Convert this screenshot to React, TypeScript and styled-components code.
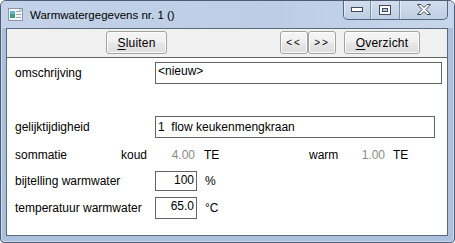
import styled, { createGlobalStyle } from "styled-components";

const GlobalStyle = createGlobalStyle`
  html, body {
    margin: 0;
    padding: 0;
    background: #ffffff;
  }
  body {
    font-family: "Liberation Sans", Arial, sans-serif;
    font-size: 12px;
    color: #000;
  }
  * {
    box-sizing: border-box;
  }
`;

const AppIcon = () => (
  <svg width="15" height="13" viewBox="0 0 15 13">
    <rect x="0.5" y="0.5" width="14" height="12" fill="#f4f6f8" stroke="#8a96a6" />
    <rect x="2" y="3" width="5" height="7" fill="#3f9a86" />
    <rect x="2" y="3" width="5" height="3" fill="#5fb7c9" />
    <rect x="8" y="3" width="5" height="1" fill="#9aa6b4" />
    <rect x="8" y="6" width="5" height="1" fill="#9aa6b4" />
    <rect x="8" y="9" width="5" height="1" fill="#9aa6b4" />
    <rect x="11" y="1" width="3" height="2" fill="#c7d0db" />
  </svg>
);

const MinGlyph = () => (
  <svg width="12" height="5" viewBox="0 0 12 5">
    <rect x="0.5" y="0.5" width="11" height="4" fill="#ffffff" stroke="#3f4d62" />
  </svg>
);

const MaxGlyph = () => (
  <svg width="12" height="10" viewBox="0 0 12 10">
    <rect x="0.5" y="0.5" width="11" height="9" fill="#ffffff" stroke="#3f4d62" />
    <rect x="3.5" y="3.5" width="5" height="3" fill="#bccbe0" stroke="#3f4d62" />
  </svg>
);

const CloseGlyph = () => (
  <svg width="14" height="11" viewBox="0 0 14 11">
    <path
      d="M0.5 0.5 H4 L7 3.5 L10 0.5 H13.5 L9 5.5 L13.5 10.5 H10 L7 7.5 L4 10.5 H0.5 L5 5.5 Z"
      fill="#ffffff"
      stroke="#3f4d62"
      strokeLinejoin="round"
    />
  </svg>
);

export default function App() {
  return (
    <>
      <GlobalStyle />
      <Window>
        <TitleBar>
          <AppIcon />
          <Caption>Warmwatergegevens nr. 1 ()</Caption>
          <Controls>
            <ControlButton $w={27}>
              <MinGlyph />
            </ControlButton>
            <ControlButton $w={29}>
              <MaxGlyph />
            </ControlButton>
            <ControlButton $w={47}>
              <CloseGlyph />
            </ControlButton>
          </Controls>
        </TitleBar>
        <Client>
          <Toolbar>
            <PushButton $w={61}>
              <u>S</u>luiten
            </PushButton>
            <NavGroup>
              <PushButton $w={28} $small>
                &lt;&lt;
              </PushButton>
              <PushButton $w={28} $small>
                &gt;&gt;
              </PushButton>
              <PushButton $w={76} $gap={8}>
                <u>O</u>verzicht
              </PushButton>
            </NavGroup>
          </Toolbar>
          <Form>
            <Row $top={2} $h={22}>
              <Label>omschrijving</Label>
              <Field $valign="top">&lt;nieuw&gt;</Field>
            </Row>
            <Row $top={32} $h={22}>
              <Label>gelijktijdigheid</Label>
              <Field $w={280}>1&nbsp; flow keukenmengkraan</Field>
            </Row>
            <Row $top={9} $h={16}>
              <Cell $w={106}>sommatie</Cell>
              <Cell $w={29}>koud</Cell>
              <Cell $w={45} $right $muted>
                4.00
              </Cell>
              <Cell $w={105} $gap={9}>
                TE
              </Cell>
              <Cell $w={31}>warm</Cell>
              <Cell $w={45} $right $muted>
                1.00
              </Cell>
              <Cell $gap={8}>TE</Cell>
            </Row>
            <Row $top={8} $h={20}>
              <Label>bijtelling warmwater</Label>
              <Field $w={42} $valign="top" $right>
                100
              </Field>
              <Unit>%</Unit>
            </Row>
            <Row $top={6} $h={22}>
              <Label>temperatuur warmwater</Label>
              <Field $w={42} $valign="top" $right>
                65.0
              </Field>
              <Unit>°C</Unit>
            </Row>
          </Form>
        </Client>
      </Window>
    </>
  );
}

const Window = styled.div`
  width: 455px;
  height: 243px;
  display: flex;
  flex-direction: column;
  background: #aac0dc;
  border: 1px solid #4c5d75;
  border-radius: 6px 6px 4px 4px;
  box-shadow: inset 0 0 0 1px #cddbee;
  overflow: hidden;
`;

const TitleBar = styled.div`
  height: 27px;
  flex: none;
  display: flex;
  align-items: center;
  padding-left: 7px;
  background: linear-gradient(to right, #c3d2e8, #bccde5 60%, #c7d6ea);
`;

const Caption = styled.span`
  margin-left: 7px;
  font-size: 11.5px;
  color: #000;
  flex: 1;
`;

const Controls = styled.div`
  align-self: flex-start;
  display: flex;
  height: 20px;
  margin-top: -1px;
  margin-right: 6px;
  border: 1px solid #55667e;
  border-top: none;
  border-radius: 0 0 5px 5px;
  overflow: hidden;
  background: linear-gradient(to bottom, #d3deee, #bfcee3);
`;

const ControlButton = styled.div<{ $w: number }>`
  width: ${(p) => p.$w}px;
  display: flex;
  align-items: center;
  justify-content: center;
  box-shadow: inset 1px 1px 0 rgba(255, 255, 255, 0.55);
  &:not(:last-child) {
    border-right: 1px solid #7d90ab;
  }
`;

const Client = styled.div`
  flex: 1;
  display: flex;
  flex-direction: column;
  margin: 0 6px 6px 5px;
  border: 1px solid #5a6a80;
  background: #ffffff;
`;

const Toolbar = styled.div`
  height: 29px;
  flex: none;
  display: flex;
  align-items: flex-start;
  padding: 2px 27px 0 99px;
  background: #f0f0f0;
  border-bottom: 1px solid #646464;
`;

const NavGroup = styled.div`
  display: flex;
  margin-left: auto;
`;

const PushButton = styled.div<{ $w: number; $gap?: number; $small?: boolean }>`
  width: ${(p) => p.$w}px;
  height: 23px;
  margin-left: ${(p) => p.$gap ?? 0}px;
  display: flex;
  align-items: center;
  justify-content: center;
  border: 1px solid #a3a3a3;
  border-radius: 3px;
  background: linear-gradient(to bottom, #f5f5f5 0%, #f0f0f0 45%, #e6e6e6 55%, #dedede 100%);
  box-shadow: inset 0 0 0 1px #fcfcfc;
  font-size: ${(p) => (p.$small ? "10px" : "12px")};
  letter-spacing: ${(p) => (p.$small ? "2px" : "0.2px")};
  color: #000;

  u {
    text-underline-offset: 2px;
  }
`;

const Form = styled.div`
  flex: 1;
  display: flex;
  flex-direction: column;
  padding: 2px 5px 0 8px;
`;

const Row = styled.div<{ $top: number; $h: number }>`
  display: flex;
  align-items: center;
  margin-top: ${(p) => p.$top}px;
  height: ${(p) => p.$h}px;
`;

const Label = styled.span`
  width: 140px;
  flex: none;
`;

const Field = styled.div<{ $w?: number; $right?: boolean; $valign?: "top" | "center" }>`
  height: 100%;
  width: ${(p) => (p.$w ? `${p.$w}px` : "auto")};
  flex: ${(p) => (p.$w ? "none" : "1")};
  display: flex;
  align-items: ${(p) => (p.$valign === "top" ? "flex-start" : "center")};
  justify-content: ${(p) => (p.$right ? "flex-end" : "flex-start")};
  padding: 1px 2px;
  line-height: 14px;
  border: 1px solid #646464;
  background: #ffffff;
  white-space: pre;
`;

const Cell = styled.span<{ $w?: number; $right?: boolean; $muted?: boolean; $gap?: number }>`
  width: ${(p) => (p.$w ? `${p.$w}px` : "auto")};
  flex: none;
  margin-left: ${(p) => p.$gap ?? 0}px;
  text-align: ${(p) => (p.$right ? "right" : "left")};
  color: ${(p) => (p.$muted ? "#8a8a8a" : "#000")};
`;

const Unit = styled.span`
  margin-left: 8px;
`;
